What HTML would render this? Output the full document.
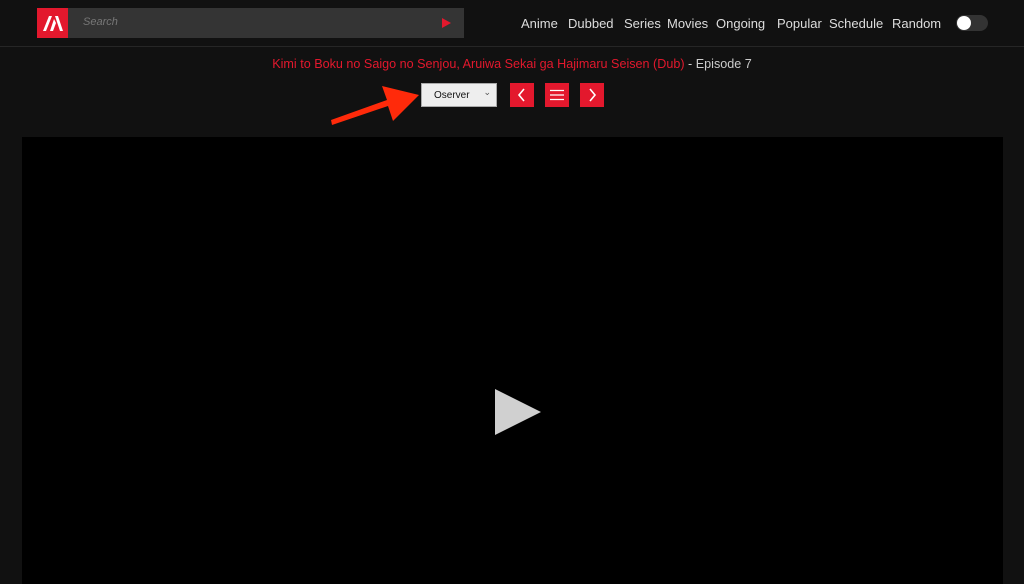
<!DOCTYPE html>
<html><head><style>
*{margin:0;padding:0;box-sizing:border-box}
body{width:1024px;height:584px;background:#111;overflow:hidden;font-family:"Liberation Sans",sans-serif;position:relative}
.hdr{position:absolute;left:0;top:0;width:1024px;height:47px;border-bottom:1px solid #262626;background:#111}
.logo{position:absolute;left:37px;top:8px;width:31px;height:30px;background:#e3182d}
.search{position:absolute;left:68px;top:8px;width:396px;height:30px;background:#343434}
.search span{position:absolute;left:15px;top:8px;color:#777;font-style:italic;font-size:11px}
nav{position:absolute;left:0;top:16px;color:#ddd;font-size:13px}
nav span{position:absolute;white-space:nowrap}
.tog{position:absolute;left:956px;top:15px;width:32px;height:16px;border-radius:8px;background:#333}
.tog i{position:absolute;left:1px;top:1px;width:14px;height:14px;border-radius:7px;background:#fff}
.title{position:absolute;left:0;width:1024px;top:57px;text-align:center;font-size:12.6px;color:#e3182d}
.title b{font-weight:normal;color:#ccc}
.sel{position:absolute;left:421px;top:83px;width:76px;height:24px;background:#eee;border:1px solid #aaa;font-size:10px;color:#111;padding:6px 0 0 12px}
.sel i{position:absolute;right:5px;top:3px;font-style:normal;font-size:9px;color:#555}
.btn{position:absolute;top:83px;width:24px;height:24px;background:#e3182d}
.vid{position:absolute;left:22px;top:137px;width:981px;height:447px;background:#000}
</style></head><body>
<div class="hdr">
<div class="logo"><svg width="31" height="30" viewBox="0 0 31 30"><path d="M6 23 L12 8 L15 8 L9 23Z M13 23 L17 11 L19 15 L16 23Z M18 8 L21 8 L26 23 L23 23Z" fill="#fff"/></svg></div>
<div class="search"><span>Search</span><svg style="position:absolute;left:373px;top:10px" width="10" height="10"><path d="M1 0 L10 5 L1 10Z" fill="#e3182d"/></svg></div>
<nav><span style="left:521px">Anime</span><span style="left:568px">Dubbed</span><span style="left:624px">Series</span><span style="left:667px">Movies</span><span style="left:716px">Ongoing</span><span style="left:777px">Popular</span><span style="left:829px">Schedule</span><span style="left:892px">Random</span></nav>
<div class="tog"><i></i></div>
</div>
<div class="title">Kimi to Boku no Saigo no Senjou, Aruiwa Sekai ga Hajimaru Seisen (Dub) <b>- Episode 7</b></div>
<div class="sel">Oserver<i>&#8964;</i></div>
<div class="btn" style="left:510px"><svg width="24" height="24"><path d="M14 6 L9 12 L14 18" stroke="#fff" stroke-width="1.6" fill="none"/></svg></div>
<div class="btn" style="left:545px"><svg width="24" height="24"><path d="M5 7.5H19M5 12H19M5 16.5H19" stroke="#fff" stroke-width="1.3"/></svg></div>
<div class="btn" style="left:580px"><svg width="24" height="24"><path d="M10 6 L15 12 L10 18" stroke="#fff" stroke-width="1.6" fill="none"/></svg></div>
<svg style="position:absolute;left:0;top:0" width="1024" height="140"><path d="M332 125 L388 106 L393 121 L419 95 L382 86 L387 100 L331 120Z" fill="#ff2a0a"/></svg>
<div class="vid"><svg style="position:absolute;left:473px;top:252px" width="47" height="46"><path d="M0 0 L46 23 L0 46Z" fill="#d0d0d0"/></svg></div>
</body></html>
